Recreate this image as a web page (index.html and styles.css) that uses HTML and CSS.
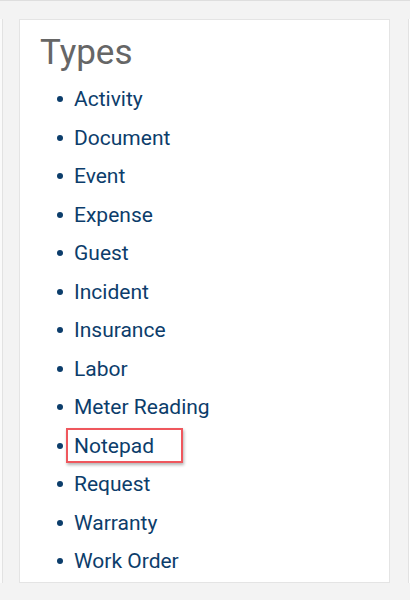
FILE: index.html
```html
<!DOCTYPE html>
<html>
<head>
<meta charset="utf-8">
<link rel="stylesheet" href="styles.css">
</head>
<body>
<div class="layout">
  <div class="side side-left"></div>
  <div class="card">
    <h2 class="title">Types</h2>
    <ul class="types">
      <li>Activity</li>
      <li>Document</li>
      <li>Event</li>
      <li>Expense</li>
      <li>Guest</li>
      <li>Incident</li>
      <li>Insurance</li>
      <li>Labor</li>
      <li>Meter Reading</li>
      <li class="marked"><span class="label">Notepad</span></li>
      <li>Request</li>
      <li>Warranty</li>
      <li>Work Order</li>
    </ul>
  </div>
  <div class="side side-right"></div>
</div>
</body>
</html>
```

FILE: styles.css
```css
html, body {
  margin: 0;
  padding: 0;
}
body {
  background: #f3f3f3;
  border-top: 1px solid #dedede;
  font-family: Roboto, "Liberation Sans", sans-serif;
  height: 599px;
  overflow: hidden;
}
.layout {
  display: flex;
  align-items: flex-start;
  padding-top: 18px;
  gap: 16px;
}
.side {
  height: 564px;
  box-sizing: border-box;
  background: #fafafa;
}
.side-left {
  width: 3px;
  border-right: 1px solid #e2e2e2;
}
.side-right {
  flex: 1;
  margin-left: 2px;
  border-left: 1px solid #e2e2e2;
  background: #ffffff;
}
.card {
  width: 371px;
  height: 564px;
  box-sizing: border-box;
  background: #ffffff;
  border: 1px solid #e4e4e4;
  padding: 12px 20px 0 20px;
}
.title {
  margin: 0;
  font-size: 35px;
  line-height: 42px;
  font-weight: 400;
  color: #666666;
}
.types {
  list-style: none;
  margin: 6px 0 0 0;
  padding: 0 0 0 17px;
}
.types li {
  display: flex;
  align-items: center;
  gap: 11px;
  font-size: 21px;
  line-height: 38.5px;
  color: #0c3d6b;
  position: relative;
}
.types li::before {
  content: "";
  width: 6px;
  height: 6px;
  border-radius: 50%;
  background: #0c3d6b;
  flex: none;
}
.marked .label {
  position: relative;
}
.marked .label::after {
  content: "";
  position: absolute;
  left: -8px;
  top: 1px;
  width: 117px;
  height: 35px;
  box-sizing: border-box;
  border: 2px solid #ef575d;
  box-shadow: 1px 2px 3px rgba(0, 0, 0, 0.3);
}
```
